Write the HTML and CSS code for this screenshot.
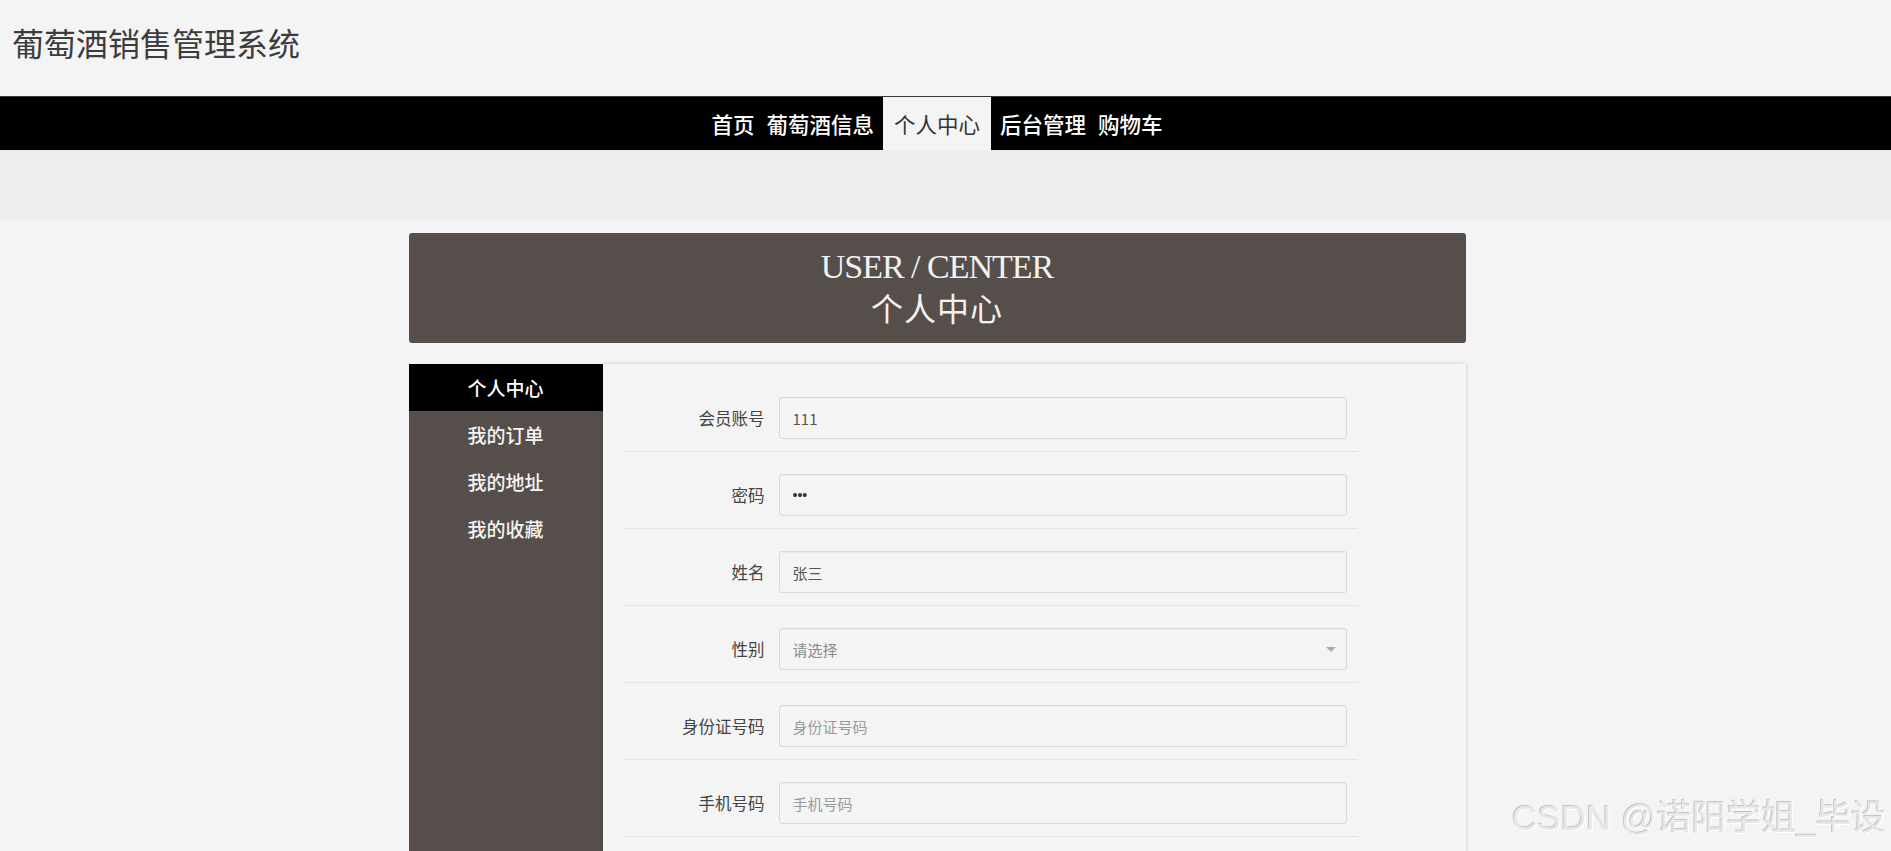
FILE: index.html
```html
<!DOCTYPE html>
<html lang="zh-CN">
<head>
<meta charset="utf-8">
<title>葡萄酒销售管理系统</title>
<link rel="stylesheet" href="styles.css">
</head>
<body>
<header class="site-header">
  <h1 class="site-title">葡萄酒销售管理系统</h1>
</header>
<nav class="main-nav">
  <div class="nav-inner">
    <a class="nav-item">首页</a>
    <a class="nav-item">葡萄酒信息</a>
    <a class="nav-item active">个人中心</a>
    <a class="nav-item">后台管理</a>
    <a class="nav-item">购物车</a>
  </div>
</nav>
<div class="band"></div>
<main class="main">
  <div class="wrap">
    <section class="title-card">
      <div class="title-en">USER / CENTER</div>
      <div class="title-cn">个人中心</div>
    </section>
    <div class="center">
      <aside class="side">
        <a class="side-item active">个人中心</a>
        <a class="side-item">我的订单</a>
        <a class="side-item">我的地址</a>
        <a class="side-item">我的收藏</a>
      </aside>
      <section class="panel">
        <form class="form">
          <div class="row">
            <label class="label">会员账号</label>
            <input class="field" type="text" value="111">
          </div>
          <div class="row">
            <label class="label">密码</label>
            <input class="field pwd" type="password" value="111">
          </div>
          <div class="row">
            <label class="label">姓名</label>
            <input class="field" type="text" value="张三">
          </div>
          <div class="row">
            <label class="label">性别</label>
            <div class="select-wrap">
              <select class="field select">
                <option>请选择</option>
                <option>男</option>
                <option>女</option>
              </select>
            </div>
          </div>
          <div class="row">
            <label class="label">身份证号码</label>
            <input class="field" type="text" placeholder="身份证号码">
          </div>
          <div class="row">
            <label class="label">手机号码</label>
            <input class="field" type="text" placeholder="手机号码">
          </div>
        </form>
      </section>
    </div>
  </div>
</main>
<div class="watermark">CSDN @诺阳学姐_毕设</div>
</body>
</html>
```
FILE: styles.css
```css
html, body {
  margin: 0;
  padding: 0;
}
body {
  background: #f4f4f4;
  font-family: "Liberation Sans", "Noto Sans CJK SC", sans-serif;
  color: #333;
  overflow: hidden;
}
.site-header {
  height: 96px;
  padding-left: 12px;
  box-sizing: border-box;
  padding-top: 20px;
}
.site-title {
  margin: 0;
  font-family: "Noto Sans CJK SC", sans-serif;
  font-weight: 400;
  font-size: 32px;
  line-height: 44px;
  color: #3c3c3c;
}
.main-nav {
  background: #000;
  border-top: 1px solid #3a3a3a;
  height: 53px;
  padding-right: 17px;
}
.nav-inner {
  display: flex;
  justify-content: center;
  height: 100%;
}
.nav-item {
  display: block;
  padding: 0 6px;
  line-height: 53px;
  font-family: "Noto Sans CJK SC", sans-serif;
  font-size: 21.5px;
  font-weight: 500;
  color: #fff;
  text-decoration: none;
}
.nav-item.active {
  background: #f4f4f4;
  color: #333;
  font-weight: 400;
  padding: 0 11px;
  margin: 0 3px;
}
.band {
  height: 71px;
  background: #eeeeee;
}
.main {
  padding-right: 17px;
}
.wrap {
  width: 1057px;
  margin: 0 auto;
  padding-top: 12px;
}
.title-card {
  background: #554e4b;
  border-radius: 3px;
  height: 110px;
  box-sizing: border-box;
  padding-top: 14px;
  text-align: center;
  color: #f2f2f2;
}
.title-en {
  font-family: "Liberation Serif", serif;
  font-size: 34px;
  line-height: 40px;
  letter-spacing: -1px;
}
.title-cn {
  font-family: "Noto Sans CJK SC", sans-serif;
  font-size: 32px;
  line-height: 40px;
  letter-spacing: 1px;
}
.center {
  display: flex;
  margin-top: 21px;
  align-items: stretch;
}
.side {
  width: 194px;
  flex: none;
  background: #554e4b;
  min-height: 600px;
  display: flex;
  flex-direction: column;
}
.side-item {
  display: block;
  height: 47px;
  line-height: 48px;
  text-align: center;
  font-family: "Noto Sans CJK SC", sans-serif;
  font-size: 19px;
  font-weight: 500;
  color: #f4f4f4;
  text-decoration: none;
}
.side-item.active {
  background: #000;
  color: #fff;
}
.panel {
  flex: 1;
  background: #f4f4f4;
  box-shadow: 0 0 4px rgba(0, 0, 0, 0.18);
  padding: 11px 108px 0 22px;
}
.row {
  display: flex;
  align-items: center;
  padding: 22px 0 12px;
  border-bottom: 1px solid #e3e3e3;
}
.label {
  width: 140px;
  padding-right: 14px;
  flex: none;
  text-align: right;
  font-family: "Noto Sans CJK SC", sans-serif;
  font-size: 16.5px;
  color: #444;
}
.field {
  width: 568px;
  height: 42px;
  box-sizing: border-box;
  border: 1px solid #d8d8d8;
  border-radius: 3px;
  background: #f4f4f4;
  padding: 0 13px;
  font-family: "Noto Sans CJK SC", sans-serif;
  font-size: 15px;
  color: #555;
  outline: none;
  box-shadow: inset 0 1px 1px rgba(0, 0, 0, 0.03);
}
.field.pwd {
  font-family: "Liberation Sans", sans-serif;
  font-size: 14px;
  letter-spacing: 0;
  color: #333;
}
.field::placeholder {
  color: #9a9a9a;
}
.select-wrap {
  position: relative;
  width: 568px;
}
.select {
  appearance: none;
  -webkit-appearance: none;
  color: #8a8a8a;
}
.select-wrap::after {
  content: "";
  position: absolute;
  right: 11px;
  top: 19px;
  border-left: 5px solid transparent;
  border-right: 5px solid transparent;
  border-top: 5px solid #aaa;
}
.watermark {
  position: fixed;
  right: 5px;
  bottom: 12px;
  font-family: "Liberation Sans", "Noto Sans CJK SC", sans-serif;
  font-size: 35px;
  line-height: 42px;
  color: #e8e8e8;
  text-shadow: -1px -1px 0 #c4c4c4, 1px 1px 0 #ffffff;
}
```
